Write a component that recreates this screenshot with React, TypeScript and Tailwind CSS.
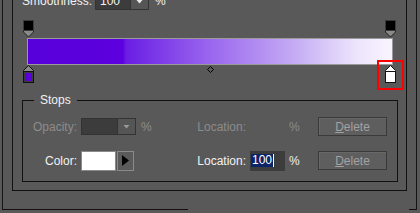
import React from "react";

function TopStop() {
  return (
    <svg width="11" height="18" viewBox="0 0 11 18">
      <polygon points="0.5,10.5 10.5,10.5 10.5,12 5.5,17 0.5,12" fill="#8a8a8a" stroke="#222" />
      <rect x="0.5" y="0.5" width="10" height="10" fill="#000" stroke="#3a3a3a" />
    </svg>
  );
}

function BottomStop({ color, selected }: { color: string; selected?: boolean }) {
  return (
    <svg width="11" height="18" viewBox="0 0 11 18">
      <polygon
        points="5.5,0.5 10.5,5.5 10.5,7 0.5,7 0.5,5.5"
        fill={selected ? "#ffffff" : "#8a8a8a"}
        stroke="#111"
      />
      <rect x="0.5" y="6.5" width="10" height="11" fill={color} stroke="#111" />
      {!selected && <rect x="1.5" y="7.5" width="8" height="9" fill="none" stroke="#3c3c3c" />}
    </svg>
  );
}

function DownArrow({ color }: { color: string }) {
  return (
    <svg width="7" height="5" viewBox="0 0 7 5">
      <polygon points="0.5,1 6.5,1 3.5,4.5" fill={color} />
    </svg>
  );
}

function DeleteButton() {
  return (
    <div className="w-[69px] h-[19px] border border-[#3a3a3a] bg-[#5e5e5e] shadow-[inset_1px_1px_0_#686868] flex items-center justify-center text-[#a2a2a2]">
      <span>
        <span className="underline">D</span>elete
      </span>
    </div>
  );
}

export default function App() {
  return (
    <div className="w-[420px] h-[213px] bg-[#595959] overflow-hidden pl-[2px] font-['Liberation_Sans',Arial,sans-serif] text-[12px] leading-[14px]">
      <div className="w-[415px] h-[210px] border-l border-r border-[#151515] flex flex-col">
        {/* frame 2 */}
        <div className="ml-[9px] w-[395px] h-[191px] border-l border-r border-b border-[#111] flex flex-col">
          {/* Smoothness row */}
          <div className="-mt-[8px] h-[18px] ml-[9px] flex items-center text-[#f2f2f2]">
            <span className="w-[73px]">Smoothness:</span>
            <div className="h-[18px] flex border border-[#333]">
              <div className="w-[34px] bg-[#3c3c3c] pl-[4px] flex items-center">100</div>
              <div className="w-[18px] bg-[#555] border-l border-[#333] flex items-center justify-center">
                <DownArrow color="#e8e8e8" />
              </div>
            </div>
            <span className="ml-[6px]">%</span>
          </div>

          {/* gradient area */}
          <div className="mt-[10px] ml-[9px] w-[376px] flex flex-col">
            <div className="h-[18px] flex justify-between pl-[1px] pr-[2px]">
              <TopStop />
              <TopStop />
            </div>
            <div className="ml-[5px] w-[366px] h-[27px] border border-[#9a9a9a] bg-[linear-gradient(to_right,#5800dc_0%,#5c00de_26%,#6a1ee4_27%,#9a66ee_50%,#c6aef4_74%,#ece4fc_90%,#f8f5ff_100%)]" />
            <div className="relative h-[18px] flex justify-between pl-[1px] pr-[2px]">
              <BottomStop color="#5a00dc" />
              <svg
                className="absolute left-[185px] top-[1px]"
                width="7"
                height="7"
                viewBox="0 0 7 7"
              >
                <polygon points="3.5,0.5 6.5,3.5 3.5,6.5 0.5,3.5" fill="#5a5a5a" stroke="#000" />
              </svg>
              <div className="relative">
                <BottomStop color="#ffffff" selected />
                <div className="absolute -left-[8px] -top-[5px] w-[27px] h-[30px] border-2 border-[#f00]" />
              </div>
            </div>
          </div>

          {/* Stops fieldset */}
          <div className="relative mt-[17px] ml-[9px] w-[376px] h-[82px] border border-[#111] pt-[16px] flex flex-col">
            <span className="absolute -top-[8px] left-[11px] px-[6px] bg-[#595959] text-[#f2f2f2]">Stops</span>
            {/* row 1 */}
            <div className="h-[19px] flex items-center text-[#8c8c8c]">
              <span className="w-[54px] text-right">Opacity:</span>
              <div className="ml-[4px] w-[55px] h-[17px] flex border border-[#333]">
                <div className="w-[35px] bg-[#3c3c3c]" />
                <div className="flex-1 bg-[#555] border-l border-[#333] flex items-center justify-center">
                  <DownArrow color="#9a9a9a" />
                </div>
              </div>
              <span className="ml-[5px] w-[10px]">%</span>
              <span className="w-[95px] text-right">Location:</span>
              <span className="ml-[4px] w-[35px]" />
              <span className="ml-[4px] w-[29px]">%</span>
              <DeleteButton />
            </div>
            {/* row 2 */}
            <div className="mt-[14px] h-[21px] flex items-center text-[#f2f2f2]">
              <span className="w-[54px] text-right">Color:</span>
              <div className="ml-[4px] w-[55px] h-[20px] flex">
                <div className="w-[35px] h-[20px] bg-white border border-[#8a8a8a]" />
                <div className="ml-[1px] w-[17px] h-[20px] bg-[#5a5a5a] border border-[#8a8a8a] flex items-center justify-center">
                  <svg width="7" height="11" viewBox="0 0 7 11">
                    <polygon points="0,0 7,5.5 0,11" fill="#000" />
                  </svg>
                </div>
              </div>
              <span className="ml-[5px] w-[10px]" />
              <span className="w-[95px] text-right">Location:</span>
              <div className="ml-[4px] w-[35px] h-[20px] bg-[#3c3c3c] flex items-center pl-[1px]">
                <span className="bg-[#0a246a] text-white px-[1px] leading-[13px]">100</span>
                <span className="w-px h-[13px] bg-white" />
              </div>
              <span className="ml-[4px] w-[29px]">%</span>
              <DeleteButton />
            </div>
          </div>
        </div>
        {/* bottom partial line */}
        <div className="mt-auto h-px flex">
          <div className="w-[185px] bg-[#111]" />
          <div className="flex-1" />
          <div className="w-[7px] bg-[#111]" />
        </div>
      </div>
    </div>
  );
}
